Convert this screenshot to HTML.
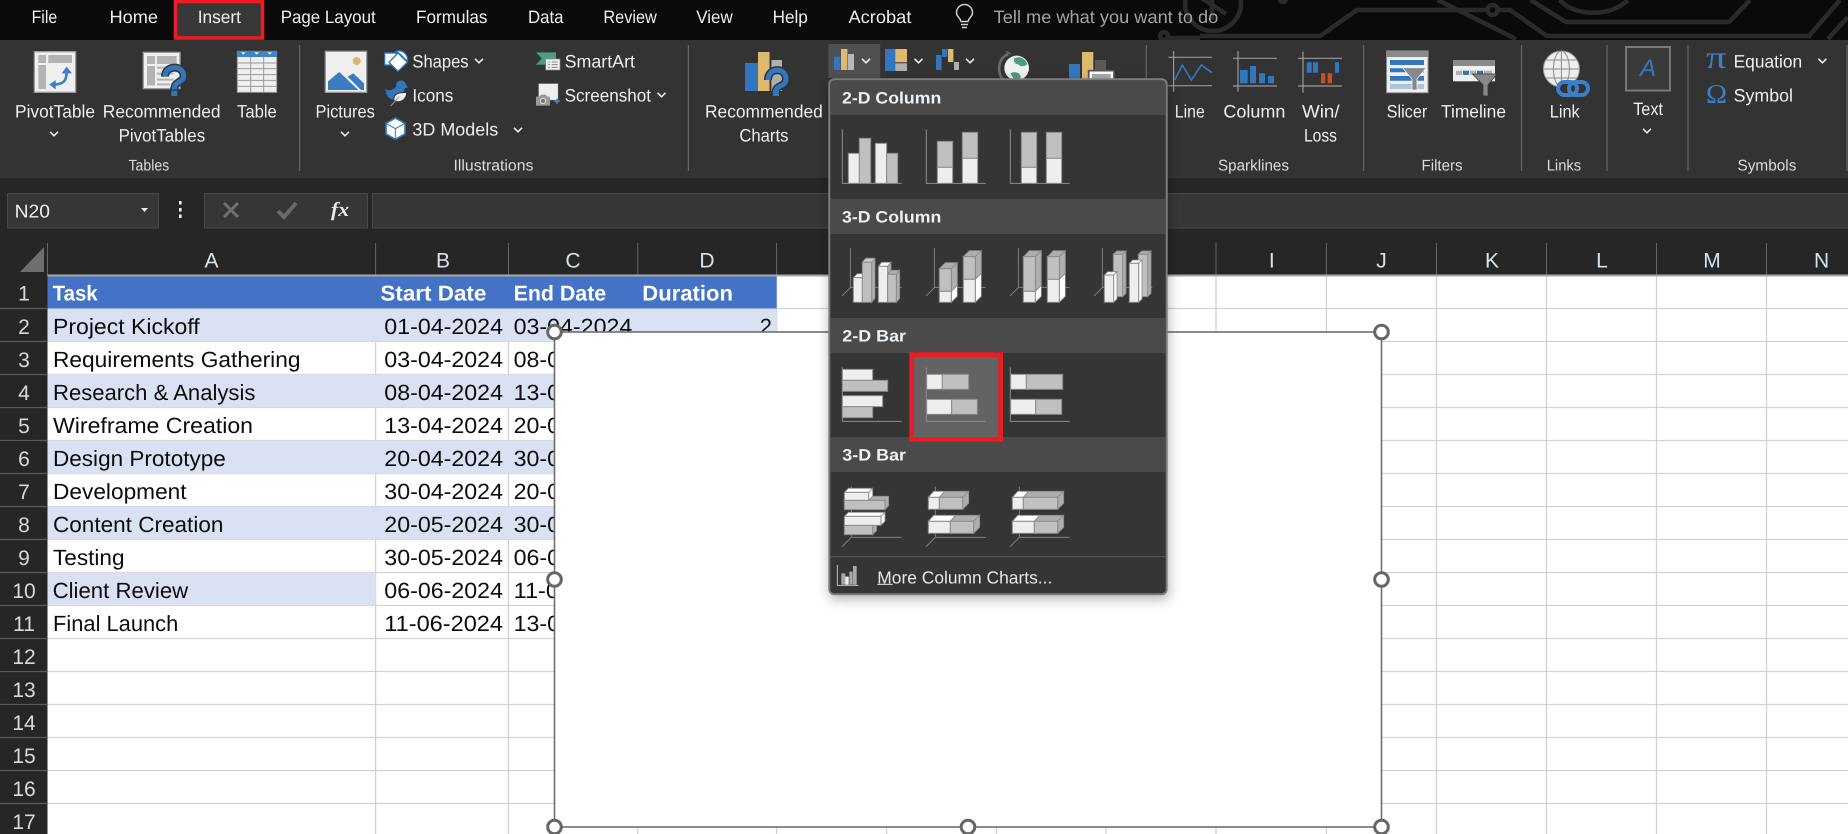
<!DOCTYPE html>
<html lang="en"><head><meta charset="utf-8"><title>Excel Insert Chart</title>
<style>
html,body{margin:0;padding:0;width:1848px;height:834px;overflow:hidden;background:#fff}
svg{display:block}
text{font-family:"Liberation Sans",sans-serif;text-rendering:geometricPrecision;white-space:pre}
.tab{font-size:18px;fill:#efefef}
.r{font-size:18px;fill:#efefef}
.g{font-size:15.5px;fill:#dcdcdc}
.t{font-size:22px;fill:#0c0c0c}
.h{font-size:21.5px;fill:#fff;font-weight:bold}
.hd{font-size:21px;fill:#d8e2ea;text-anchor:middle}
.rn{font-size:21px;fill:#d9d9d9;text-anchor:middle}
.m{font-size:16.5px;font-weight:bold;fill:#edf2f8}
.ax{fill:none;stroke:#8c8c8c;stroke-width:3}
.w{fill:#eeeeee;stroke:#8a8a8a;stroke-width:3}
.k{fill:#c0c0c0;stroke:#8a8a8a;stroke-width:3}
.w2{fill:#ffffff;stroke:#8a8a8a;stroke-width:2.5}
.k2{fill:#aeaeae;stroke:#8a8a8a;stroke-width:2.5}
.ch{fill:none;stroke:#efefef;stroke-width:1.6}
.c{fill:none;stroke:#2a2a2a;stroke-width:4.5}
.hn{fill:#fff;stroke:#666;stroke-width:3}
</style></head>
<body>
<svg xmlns="http://www.w3.org/2000/svg" width="1848" height="834" viewBox="0 0 1848 834">
<defs>
<path id="chev" d="M-4 -2.2L0 1.8L4 -2.2"/>
<filter id="sh" x="-10%" y="-10%" width="120%" height="120%"><feDropShadow dx="1" dy="4" stdDeviation="6" flood-color="#000" flood-opacity=".3"/></filter>
</defs>

<!-- base -->
<rect width="1848" height="834" fill="#fff"/>
<rect width="1848" height="40" fill="#0a0a0a"/>
<!-- circuit pattern -->
<path class="c" d="M1200 36H1320L1357 10H1487M1498 10H1510L1547 36H1809L1840 0"/>
<circle class="c" cx="1492.5" cy="10" r="5"/>
<path class="c" d="M1437.6 0L1516 39M1530.6 0L1566 22H1729L1750 0M1559.5 0C1575 17 1612 17 1627.7 0M1828 39L1848 17"/>
<circle class="c" cx="1213" cy="3" r="28"/>
<path class="c" d="M1200 -3L1226 14M1212 -5V20"/>
<circle class="c" cx="1164" cy="36" r="4"/>
<circle class="c" cx="1283" cy="-1" r="3"/>
<path class="c" d="M1168 38H1200"/>
<rect y="40" width="1848" height="138" fill="#333333"/>
<rect y="178" width="1848" height="98" fill="#262626"/>
<rect y="276" width="47.5" height="558" fill="#262626"/>

<!-- tabs -->
<rect x="177" y="2" width="85" height="37" fill="#383838"/>
<text class="tab" x="31.6" y="23" textLength="25.6" lengthAdjust="spacingAndGlyphs">File</text>
<text class="tab" x="109.5" y="23" textLength="48.5" lengthAdjust="spacingAndGlyphs">Home</text>
<text class="tab" x="197.7" y="23" textLength="43.3" lengthAdjust="spacingAndGlyphs">Insert</text>
<text class="tab" x="280.7" y="23" textLength="95" lengthAdjust="spacingAndGlyphs">Page Layout</text>
<text class="tab" x="416" y="23" textLength="71.5" lengthAdjust="spacingAndGlyphs">Formulas</text>
<text class="tab" x="528" y="23" textLength="35.5" lengthAdjust="spacingAndGlyphs">Data</text>
<text class="tab" x="603.4" y="23" textLength="53.4" lengthAdjust="spacingAndGlyphs">Review</text>
<text class="tab" x="696.3" y="23" textLength="36.4" lengthAdjust="spacingAndGlyphs">View</text>
<text class="tab" x="772.6" y="23" textLength="35.2" lengthAdjust="spacingAndGlyphs">Help</text>
<text class="tab" x="848.5" y="23" textLength="62.9" lengthAdjust="spacingAndGlyphs">Acrobat</text>
<text class="tab" x="993.7" y="23" textLength="224.6" lengthAdjust="spacingAndGlyphs" style="fill:#a3a3a3">Tell me what you want to do</text>
<rect x="175.5" y="1.5" width="87" height="36.5" fill="none" stroke="#ed1c24" stroke-width="3.6"/>
<g fill="none" stroke="#d0d0d0" stroke-width="1.5"><path d="M961 21.5C960 17 956.5 17 956.5 12.5A8 8 0 0 1 972.5 12.5C972.5 17 969 17 968 21.5ZM961 24.5H968M962 27.5H967"/></g>

<!-- separators -->
<g stroke="#666" stroke-width="1.2">
<path d="M299.7 45V171M688.4 45V171M1146.3 45V171M1363.7 45V171M1521.5 45V171M1607 45V171M1688 45V171M1847 45V171"/>
</g>

<!-- ribbon labels -->
<text class="r" x="15" y="117.3" textLength="80" lengthAdjust="spacingAndGlyphs">PivotTable</text>
<text class="r" x="102.8" y="117.3" textLength="117.8" lengthAdjust="spacingAndGlyphs">Recommended</text>
<text class="r" x="118.6" y="141.5" textLength="86.6" lengthAdjust="spacingAndGlyphs">PivotTables</text>
<text class="r" x="237" y="117.3" textLength="39.8" lengthAdjust="spacingAndGlyphs">Table</text>
<text class="r" x="315.5" y="117.3" textLength="59.3" lengthAdjust="spacingAndGlyphs">Pictures</text>
<text class="r" x="412.4" y="67.7" textLength="56.2" lengthAdjust="spacingAndGlyphs">Shapes</text>
<text class="r" x="412.4" y="101.7" textLength="41" lengthAdjust="spacingAndGlyphs">Icons</text>
<text class="r" x="412.4" y="135.7" textLength="85.8" lengthAdjust="spacingAndGlyphs">3D Models</text>
<text class="r" x="564.6" y="67.7" textLength="70.4" lengthAdjust="spacingAndGlyphs">SmartArt</text>
<text class="r" x="564.6" y="101.7" textLength="86.4" lengthAdjust="spacingAndGlyphs">Screenshot</text>
<text class="r" x="705" y="117.3" textLength="117.8" lengthAdjust="spacingAndGlyphs">Recommended</text>
<text class="r" x="739.4" y="141.5" textLength="49" lengthAdjust="spacingAndGlyphs">Charts</text>
<text class="r" x="1174.8" y="117.3" textLength="30" lengthAdjust="spacingAndGlyphs">Line</text>
<text class="r" x="1223.4" y="117.3" textLength="62" lengthAdjust="spacingAndGlyphs">Column</text>
<text class="r" x="1302" y="117.3" textLength="37.6" lengthAdjust="spacingAndGlyphs">Win/</text>
<text class="r" x="1304" y="141.5" textLength="33" lengthAdjust="spacingAndGlyphs">Loss</text>
<text class="r" x="1386.6" y="117.3" textLength="40.7" lengthAdjust="spacingAndGlyphs">Slicer</text>
<text class="r" x="1441" y="117.3" textLength="65" lengthAdjust="spacingAndGlyphs">Timeline</text>
<text class="r" x="1549.8" y="117.3" textLength="29.9" lengthAdjust="spacingAndGlyphs">Link</text>
<text class="r" x="1633.2" y="115" textLength="29.8" lengthAdjust="spacingAndGlyphs">Text</text>
<text class="r" x="1733.6" y="67.7" textLength="68.6" lengthAdjust="spacingAndGlyphs">Equation</text>
<text class="r" x="1733.6" y="101.7" textLength="59.4" lengthAdjust="spacingAndGlyphs">Symbol</text>
<text class="g" x="128.5" y="170.7" textLength="40.7" lengthAdjust="spacingAndGlyphs">Tables</text>
<text class="g" x="453.5" y="170.7" textLength="79.9" lengthAdjust="spacingAndGlyphs">Illustrations</text>
<text class="g" x="1218" y="170.7" textLength="71" lengthAdjust="spacingAndGlyphs">Sparklines</text>
<text class="g" x="1421.5" y="170.7" textLength="41.1" lengthAdjust="spacingAndGlyphs">Filters</text>
<text class="g" x="1546.7" y="170.7" textLength="34.5" lengthAdjust="spacingAndGlyphs">Links</text>
<text class="g" x="1737.5" y="170.7" textLength="58.9" lengthAdjust="spacingAndGlyphs">Symbols</text>

<!-- icons row 1: zoom coords -->
<g transform="translate(25,44) scale(.33333)">
 <rect x="28" y="23" width="124" height="122" fill="#efefef" stroke="#9a9a9a" stroke-width="4"/>
 <path d="M40 33h23v24h-23zM70 33h71v24h-71zM40 63h23v72h-23z" fill="#b3b3b3"/>
 <path d="M125 82C125 112 115 120 88 122" fill="none" stroke="#3a7fc7" stroke-width="8"/>
 <path d="M110 88L125 68L141 88ZM92 108L73 122L92 136Z" fill="#3a7fc7"/>
 <rect x="355" y="25" width="110" height="109" fill="#efefef" stroke="#9a9a9a" stroke-width="4"/>
 <path d="M366 36h24v24h-24zM396 36h59v24h-59zM366 66h24v58h-24zM396 68h30v6h-30zM396 86h50v6h-50zM396 104h50v6h-50zM396 118h40v6h-40z" fill="#b3b3b3"/>
 <path d="M420 98C420 62 476 62 476 96C476 116 448 110 448 136" fill="none" stroke="#333" stroke-width="24"/>
 <path d="M420 98C420 62 476 62 476 96C476 116 448 110 448 136" fill="none" stroke="#3277bd" stroke-width="15"/>
 <rect x="439" y="140" width="18" height="16" fill="#3277bd"/>
 <rect x="637" y="22" width="118" height="123" fill="#efefef" stroke="#9a9a9a" stroke-width="3"/>
 <rect x="636" y="21" width="120" height="18" fill="#3d85c6"/>
 <path d="M648 25h14l-7 7zM688 25h14l-7 7zM727 25h14l-7 7z" fill="#fff"/>
 <path d="M637 57H755M637 74H755M637 92H755M637 109H755M637 127H755M677 39V145M716 39V145" stroke="#9a9a9a" stroke-width="3" fill="none"/>
 <rect x="901" y="22" width="124" height="123" fill="#efefef" stroke="#9a9a9a" stroke-width="4"/>
 <circle cx="995" cy="51" r="12" fill="#e0b46c"/>
 <path d="M909 138V112L943 84L1000 138ZM968 98L985 88L1017 118V138H1008Z" fill="#3a7cc1"/>
</g>

<!-- shapes column -->
<g transform="translate(380,44) scale(.33333)">
 <rect x="14" y="27" width="35" height="36" fill="#fff" stroke="#2f75b5" stroke-width="4"/>
 <path d="M48 22A26 26 0 0 1 82 52L60 30Z" fill="#fff" stroke="#2f75b5" stroke-width="4"/>
 <path d="M54 27L82 55L54 82L27 55Z" fill="#fff" stroke="#2f75b5" stroke-width="4"/>
 <circle cx="63" cy="124" r="15" fill="#3277bd"/><path d="M74 118L84 130L70 133Z" fill="#3277bd"/>
 <path d="M15 135C20 165 40 172 50 165L74 138L50 125C40 140 28 142 15 135Z" fill="#3277bd"/>
 <path d="M42 170C38 150 55 145 80 145C80 165 62 180 42 170Z" fill="#eee" stroke="#333" stroke-width="3"/>
 <path d="M32 186L58 158" stroke="#999" stroke-width="3"/>
 <path d="M46 222L75 238V270L46 286L18 270V238Z" fill="#fff" stroke="#2f75b5" stroke-width="5"/>
 <path d="M18 238L46 254L75 238M46 254V286" fill="none" stroke="#2f75b5" stroke-width="3"/>
 <path d="M468 25H528V50H498V62H468L485 44Z" fill="#4e9a85"/>
 <rect x="497" y="45" width="43" height="33" fill="#efefef" stroke="#8a8a8a" stroke-width="2"/>
 <path d="M505 54h5M515 54h18M505 62h5M515 62h18M505 70h5M515 70h18" stroke="#888" stroke-width="3"/>
 <rect x="476" y="119" width="58" height="49" fill="#efefef" stroke="#999" stroke-width="2" stroke-dasharray="4 3"/>
 <path d="M468 185V158H478L483 152H497L502 158H510V185Z" fill="#9a9a9a"/>
 <circle cx="489" cy="171" r="8" fill="#777" stroke="#ddd" stroke-width="3"/>
 <path d="M531 164V180M523 172H540" stroke="#3a7fc7" stroke-width="5"/>
</g>

<!-- recommended charts -->
<rect x="745" y="63" width="13" height="28" fill="#3277bd"/>
<rect x="758" y="52" width="11.5" height="39" fill="#e0b970"/>
<rect x="771.4" y="60" width="10.6" height="31" fill="#b0b0b0"/>
<path d="M768 80C768 67 786 67 786 79C786 87 776 85 776 91" fill="none" stroke="#333" stroke-width="8"/>
<path d="M768 80C768 67 786 67 786 79C786 87 776 85 776 91" fill="none" stroke="#3277bd" stroke-width="5"/>
<rect x="773" y="90" width="6" height="6" fill="#3277bd"/>

<!-- chart group -->
<rect x="828.4" y="44" width="51.8" height="34" fill="#505050"/>
<rect x="834" y="56.7" width="6.3" height="13.3" fill="#3277bd"/><rect x="841" y="49" width="6.4" height="21" fill="#e0b970"/><rect x="848" y="54" width="6" height="16" fill="#b8b8b8"/>
<rect x="885" y="49" width="10" height="22" fill="#3277bd"/><rect x="895.2" y="49" width="11.8" height="13.3" fill="#e0b970"/><rect x="895.2" y="63.3" width="11.8" height="7.7" fill="#b0b0b0"/>
<rect x="936" y="55" width="5.5" height="15" fill="#3277bd"/><rect x="942" y="49" width="5.4" height="8" fill="#3277bd"/><rect x="948" y="49" width="5.4" height="13" fill="#e0b970"/><rect x="954" y="62" width="5" height="8" fill="#b0b0b0"/>
<g transform="translate(990,44) scale(.33333)">
 <path d="M55 30C20 45 22 90 40 108" fill="none" stroke="#6a6a6a" stroke-width="8"/>
 <path d="M48 22L62 30" stroke="#6a6a6a" stroke-width="4"/>
 <circle cx="80" cy="72" r="37" fill="#f0f0f0"/>
 <path d="M72 44C85 34 105 42 112 60C100 72 88 66 84 60C76 62 70 52 72 44ZM62 88C75 80 92 86 92 100C80 110 68 106 62 88Z" fill="#4f9c80"/>
 <rect x="237" y="60" width="33" height="60" fill="#3277bd"/><rect x="276" y="24" width="34" height="96" fill="#e0b970"/><rect x="315" y="48" width="33" height="40" fill="#5a5a5a"/>
 <rect x="296" y="80" width="76" height="40" fill="#fff" stroke="#555" stroke-width="5"/><rect x="306" y="90" width="56" height="30" fill="#aaa"/>
</g>

<!-- chevrons -->
<g class="ch">
<use href="#chev" x="54" y="134"/><use href="#chev" x="345" y="134"/><use href="#chev" x="479" y="61"/><use href="#chev" x="518" y="130"/><use href="#chev" x="661.5" y="95"/><use href="#chev" x="866" y="61"/><use href="#chev" x="918.5" y="61"/><use href="#chev" x="970" y="61"/><use href="#chev" x="1647" y="131"/><use href="#chev" x="1822.4" y="61"/>
</g>

<!-- sparklines -->
<path d="M1168.4 57.3H1212M1168.4 85.7H1212M1173.6 51V91.7M1233 58.3H1277M1233 86H1277M1238 51V91.7M1298 58.3H1342M1298 86H1342M1303 51.7V92.7" stroke="#9a9a9a" stroke-width="1.2" fill="none"/>
<path d="M1174.8 80L1182.3 65L1191.4 80L1201.3 65L1212 72.7" fill="none" stroke="#3277bd" stroke-width="1.6"/>
<path d="M1240 70h7.7v13.3h-7.7zM1250 66h6v17.3h-6zM1259 73.3h6v10h-6zM1268 76h6v7.3h-6zM1306.7 62.3h5v10.4h-5zM1313 62.3h5v10.4h-5zM1335 62.3h4v10.4h-4z" fill="#3277bd"/>
<path d="M1321 73.3h4.3v10h-4.3zM1327.6 73.3h4.4v10h-4.4z" fill="#c8502a"/>

<!-- slicer -->
<rect x="1386.6" y="51" width="41.4" height="41.7" fill="#efefef" stroke="#9a9a9a"/>
<rect x="1386.6" y="51" width="41.4" height="6" fill="#8a8a8a"/>
<path d="M1390 60h34v5h-34zM1390 68.3h34v4h-34zM1390 76h34v4.7h-34z" fill="#3277bd"/>
<rect x="1390" y="84" width="34" height="5" fill="#b0c4de"/>
<path d="M1402.5 67.7H1426L1417 79V90H1412V79Z" fill="#888" stroke="#efefef" stroke-width=".8"/>
<!-- timeline -->
<rect x="1453" y="60" width="42" height="21.3" fill="#efefef"/>
<rect x="1453" y="60" width="42" height="6" fill="#8a8a8a"/>
<path d="M1456 70.7h6v4.3h-6zM1470 70.7h6v4.3h-6zM1484 70.7h8v4.3h-8z" fill="#b0b0b0"/>
<path d="M1463 70.7h6v4.3h-6zM1477 70.7h6v4.3h-6z" fill="#3277bd"/>
<path d="M1472.6 74H1497L1488 85V96H1483V85Z" fill="#888" stroke="#333" stroke-width=".8"/>
<!-- link -->
<circle cx="1561.4" cy="69" r="18" fill="#eee" stroke="#9a9a9a"/>
<path d="M1543.4 69H1579.4M1546 60H1577M1546 78H1577M1561.4 51V87" stroke="#8a8a8a" fill="none"/>
<ellipse cx="1561.4" cy="69" rx="8" ry="18" fill="none" stroke="#8a8a8a"/>
<rect x="1558" y="82" width="19" height="13" rx="6.5" fill="#333" stroke="#3a7fc7" stroke-width="4"/>
<rect x="1569" y="82" width="19" height="13" rx="6.5" fill="none" stroke="#3a7fc7" stroke-width="4"/>
<!-- text box -->
<rect x="1626" y="47" width="44" height="43.5" fill="#3a3a3a" stroke="#7a7a7a" stroke-width="2"/>
<text x="1648" y="76" text-anchor="middle" style="font-size:24px;font-style:italic;fill:#3277bd">A</text>
<text x="1706" y="68" style="font-size:32px;font-family:'Liberation Serif',serif;fill:#3a7fc7" textLength="20.5" lengthAdjust="spacingAndGlyphs">π</text>
<text x="1706" y="103" style="font-size:27px;font-family:'Liberation Serif',serif;fill:#3a7fc7" textLength="21" lengthAdjust="spacingAndGlyphs">Ω</text>

<!-- formula bar -->
<rect x="7.5" y="193.5" width="151" height="34.5" fill="#363636" stroke="#484848"/>
<text x="14.6" y="217.7" textLength="35.4" lengthAdjust="spacingAndGlyphs" style="font-size:18.5px;fill:#efefef">N20</text>
<path d="M141 208h7l-3.500 4z" fill="#efefef"/>
<path d="M180.300 201v3.500M180.300 208v3.500M180.300 214.500v3.500" stroke="#efefef" stroke-width="2.600"/>
<rect x="204.500" y="193.500" width="163" height="34.500" fill="#363636" stroke="#484848"/>
<path d="M224 203L238 217M238 203L224 217" stroke="#707070" stroke-width="3"/>
<path d="M278 211L284 217L296 203" fill="none" stroke="#6a6a6a" stroke-width="4"/>
<text x="331" y="216" style="font-size:20px;font-family:'Liberation Serif',serif;font-style:italic;font-weight:bold;fill:#e8e8e8" textLength="18" lengthAdjust="spacingAndGlyphs">fx</text>
<rect x="372.500" y="193.500" width="1480" height="34.500" fill="#363636" stroke="#484848"/>

<!-- column headers -->
<path d="M44 247V272H20Z" fill="#6e6e6e"/>
<path d="M47.500 243V276M375.600 243V275M508.500 243V275M637.800 243V275M776.600 243V275M886.600 243V275M996.500 243V275M1106 243V275M1216 243V275M1326.400 243V275M1436.500 243V275M1546.500 243V275M1656.500 243V275M1766.500 243V275" stroke="#666" stroke-width="1"/>
<text class="hd" x="211.500" y="267.700">A</text><text class="hd" x="443" y="267.700">B</text><text class="hd" x="573" y="267.700">C</text><text class="hd" x="707" y="267.700">D</text>
<text class="hd" x="1271.800" y="267.700">I</text><text class="hd" x="1381.500" y="267.700">J</text><text class="hd" x="1492" y="267.700">K</text><text class="hd" x="1602" y="267.700">L</text><text class="hd" x="1712" y="267.700">M</text><text class="hd" x="1821.600" y="267.700">N</text>

<!-- row headers -->
<path d="M0 308.500H47M0 341.500H47M0 374.500H47M0 407.500H47M0 440.500H47M0 473.500H47M0 506.500H47M0 539.500H47M0 572.500H47M0 605.500H47M0 638.500H47M0 671.500H47M0 704.500H47M0 737.500H47M0 770.500H47M0 803.500H47" stroke="#5a5a5a" stroke-width="1.200"/>
<rect x="47.500" y="276" width="1800.500" height="558" fill="#fff"/>
<text class="rn" x="24" y="300.700">1</text><text class="rn" x="24" y="334">2</text><text class="rn" x="24" y="367">3</text><text class="rn" x="24" y="400">4</text><text class="rn" x="24" y="433">5</text><text class="rn" x="24" y="466">6</text><text class="rn" x="24" y="499">7</text><text class="rn" x="24" y="532">8</text><text class="rn" x="24" y="565">9</text><text class="rn" x="24" y="598">10</text><text class="rn" x="24" y="631">11</text><text class="rn" x="24" y="664">12</text><text class="rn" x="24" y="697">13</text><text class="rn" x="24" y="730">14</text><text class="rn" x="24" y="763">15</text><text class="rn" x="24" y="796">16</text><text class="rn" x="24" y="829">17</text>

<!-- gridlines -->
<path d="M47.500 308.500H1848M47.500 341.500H1848M47.500 374.500H1848M47.500 407.500H1848M47.500 440.500H1848M47.500 473.500H1848M47.500 506.500H1848M47.500 539.500H1848M47.500 572.500H1848M47.500 605.500H1848M47.500 638.500H1848M47.500 671.500H1848M47.500 704.500H1848M47.500 737.500H1848M47.500 770.500H1848M47.500 803.500H1848M375.600 276V834M508.500 276V834M637.800 276V834M776.600 276V834M886.600 276V834M996.500 276V834M1106 276V834M1216 276V834M1326.400 276V834M1436.500 276V834M1546.500 276V834M1656.500 276V834M1766.500 276V834" stroke="#d2d2d2" stroke-width="1.300" fill="none"/>

<!-- table fills -->
<rect x="47.500" y="276" width="729.100" height="32.500" fill="#4472c4"/>
<g fill="#d9e1f2">
<rect x="47.500" y="308.500" width="729.100" height="33"/><rect x="47.500" y="374.500" width="729.100" height="33"/><rect x="47.500" y="440.500" width="729.100" height="33"/><rect x="47.500" y="506.500" width="729.100" height="33"/><rect x="47.500" y="572.500" width="328.100" height="33"/>
</g>
<path d="M47.500 275.500H1848" stroke="#a8a8a8" stroke-width="2"/>

<!-- table text -->
<text class="h" x="52.600" y="300.700" textLength="45.100" lengthAdjust="spacingAndGlyphs">Task</text>
<text class="h" x="380.400" y="300.700" textLength="106" lengthAdjust="spacingAndGlyphs">Start Date</text>
<text class="h" x="513.600" y="300.700" textLength="92.600" lengthAdjust="spacingAndGlyphs">End Date</text>
<text class="h" x="642.300" y="300.700" textLength="90.700" lengthAdjust="spacingAndGlyphs">Duration</text>
<text class="t" x="53" y="334" textLength="146.700" lengthAdjust="spacingAndGlyphs">Project Kickoff</text>
<text class="t" x="53" y="367" textLength="247.500" lengthAdjust="spacingAndGlyphs">Requirements Gathering</text>
<text class="t" x="53" y="400" textLength="202.400" lengthAdjust="spacingAndGlyphs">Research &amp; Analysis</text>
<text class="t" x="53" y="433" textLength="200" lengthAdjust="spacingAndGlyphs">Wireframe Creation</text>
<text class="t" x="53" y="466" textLength="172.800" lengthAdjust="spacingAndGlyphs">Design Prototype</text>
<text class="t" x="53" y="499" textLength="133.600" lengthAdjust="spacingAndGlyphs">Development</text>
<text class="t" x="53" y="532" textLength="170.400" lengthAdjust="spacingAndGlyphs">Content Creation</text>
<text class="t" x="53" y="565" textLength="71.500" lengthAdjust="spacingAndGlyphs">Testing</text>
<text class="t" x="52.600" y="598" textLength="135.600" lengthAdjust="spacingAndGlyphs">Client Review</text>
<text class="t" x="53" y="631" textLength="125.300" lengthAdjust="spacingAndGlyphs">Final Launch</text>
<g>
<text class="t" x="384.300" y="334" textLength="118.700" lengthAdjust="spacingAndGlyphs">01-04-2024</text>
<text class="t" x="384.300" y="367" textLength="118.700" lengthAdjust="spacingAndGlyphs">03-04-2024</text>
<text class="t" x="384.300" y="400" textLength="118.700" lengthAdjust="spacingAndGlyphs">08-04-2024</text>
<text class="t" x="384.300" y="433" textLength="118.700" lengthAdjust="spacingAndGlyphs">13-04-2024</text>
<text class="t" x="384.300" y="466" textLength="118.700" lengthAdjust="spacingAndGlyphs">20-04-2024</text>
<text class="t" x="384.300" y="499" textLength="118.700" lengthAdjust="spacingAndGlyphs">30-04-2024</text>
<text class="t" x="384.300" y="532" textLength="118.700" lengthAdjust="spacingAndGlyphs">20-05-2024</text>
<text class="t" x="384.300" y="565" textLength="118.700" lengthAdjust="spacingAndGlyphs">30-05-2024</text>
<text class="t" x="384.300" y="598" textLength="118.700" lengthAdjust="spacingAndGlyphs">06-06-2024</text>
<text class="t" x="384.300" y="631" textLength="118.700" lengthAdjust="spacingAndGlyphs">11-06-2024</text>
<text class="t" x="513.600" y="334" textLength="118.700" lengthAdjust="spacingAndGlyphs">03-04-2024</text>
<text class="t" x="513.600" y="367" textLength="118.700" lengthAdjust="spacingAndGlyphs">08-04-2024</text>
<text class="t" x="513.600" y="400" textLength="118.700" lengthAdjust="spacingAndGlyphs">13-04-2024</text>
<text class="t" x="513.600" y="433" textLength="118.700" lengthAdjust="spacingAndGlyphs">20-04-2024</text>
<text class="t" x="513.600" y="466" textLength="118.700" lengthAdjust="spacingAndGlyphs">30-04-2024</text>
<text class="t" x="513.600" y="499" textLength="118.700" lengthAdjust="spacingAndGlyphs">20-05-2024</text>
<text class="t" x="513.600" y="532" textLength="118.700" lengthAdjust="spacingAndGlyphs">30-05-2024</text>
<text class="t" x="513.600" y="565" textLength="118.700" lengthAdjust="spacingAndGlyphs">06-06-2024</text>
<text class="t" x="513.600" y="598" textLength="118.700" lengthAdjust="spacingAndGlyphs">11-06-2024</text>
<text class="t" x="513.600" y="631" textLength="118.700" lengthAdjust="spacingAndGlyphs">13-06-2024</text>
<text class="t" x="772" y="334" text-anchor="end">2</text>
</g>

<!-- chart placeholder -->
<rect x="554.500" y="332" width="827" height="495" fill="#fff" stroke="#6e6e6e" stroke-width="1.600"/>
<circle class="hn" cx="554.500" cy="332" r="6.800"/><circle class="hn" cx="1381.500" cy="332" r="6.800"/>
<circle class="hn" cx="554.500" cy="579.500" r="6.800"/><circle class="hn" cx="1381.500" cy="579.500" r="6.800"/>
<circle class="hn" cx="554.500" cy="827" r="6.800"/><circle class="hn" cx="968" cy="827" r="6.800"/><circle class="hn" cx="1381.500" cy="827" r="6.800"/>

<!-- dropdown menu -->
<rect x="829.300" y="79.300" width="337.400" height="515" rx="5" fill="#363636" stroke="#7c7c7c" stroke-width="2" filter="url(#sh)"/>
<path d="M830.300 85Q830.300 80.300 835 80.300H1161Q1165.700 80.300 1165.700 85V115H830.300Z" fill="#4a4a4a"/>
<rect x="830.300" y="199" width="335.400" height="35" fill="#4a4a4a"/>
<rect x="830.300" y="318" width="335.400" height="35" fill="#4a4a4a"/>
<rect x="830.300" y="437" width="335.400" height="35" fill="#4a4a4a"/>
<path d="M830.300 556.700H1165.700" stroke="#555" stroke-width="1.200"/>
<text class="m" x="842" y="103.300" textLength="99.300" lengthAdjust="spacingAndGlyphs">2-D Column</text>
<text class="m" x="842" y="222.700" textLength="99.300" lengthAdjust="spacingAndGlyphs">3-D Column</text>
<text class="m" x="842.300" y="341.700" textLength="63.700" lengthAdjust="spacingAndGlyphs">2-D Bar</text>
<text class="m" x="842.300" y="460.300" textLength="63.700" lengthAdjust="spacingAndGlyphs">3-D Bar</text>

<!-- 2D + 3D column -->
<g transform="translate(820,70) scale(.33333)">
 <path class="ax" d="M67 178V340H245M319 178V340H497M571 178V340H749"/>
 <rect class="w" x="85" y="250" width="33" height="90"/><rect class="k" x="118" y="205" width="34" height="135"/><rect class="w" x="166" y="220" width="34" height="120"/><rect class="k" x="200" y="250" width="33" height="90"/>
 <rect class="k" x="352" y="214" width="46" height="78"/><rect class="w" x="352" y="292" width="46" height="48"/><rect class="k" x="427" y="187" width="46" height="78"/><rect class="w" x="427" y="265" width="46" height="75"/>
 <rect class="k" x="604" y="187" width="46" height="105"/><rect class="w" x="604" y="292" width="46" height="48"/><rect class="k" x="679" y="187" width="46" height="78"/><rect class="w" x="679" y="265" width="46" height="75"/>

 <path class="ax" d="M91 534V652M66 678L92 652H245M343 534V652M318 678L344 652H497M595 534V652M570 678L596 652H749M847 534V652M822 678L848 652H997" style="stroke-width:2.500"/>
 <!-- icon1 -->
 <path class="w2" d="M100 623L112 611H127V623Z"/><rect class="w" x="100" y="623" width="27" height="74"/>
 <path class="k2" d="M127 577L137 565H165V685L155 697V577Z"/><path class="k2" d="M127 577L137 565H165L155 577Z" style="fill:#c8c8c8"/><rect class="k" x="127" y="577" width="28" height="120"/>
 <path class="w2" d="M175 589L185 577H213L203 589Z"/><path class="k2" d="M203 589L213 577V610H203Z"/><rect class="w" x="175" y="589" width="28" height="108"/>
 <path class="k2" d="M203 613L213 601H239L229 613Z"/><path class="k2" d="M229 613L239 601V685L229 697Z"/><rect class="k" x="203" y="613" width="26" height="84"/>
 <!-- icon2 -->
 <path class="k2" d="M358 596L376 578H412L394 596Z"/><path class="k2" d="M394 596L412 578V646L394 664Z"/><path class="w2" d="M394 664L412 646V679L394 697Z"/><rect class="k" x="358" y="596" width="36" height="68"/><rect class="w" x="358" y="664" width="36" height="33"/>
 <path class="k2" d="M430 560L448 542H484L466 560Z"/><path class="k2" d="M466 560L484 542V610L466 628Z"/><path class="w2" d="M466 628L484 610V679L466 697Z"/><rect class="k" x="430" y="560" width="36" height="68"/><rect class="w" x="430" y="628" width="36" height="69"/>
 <!-- icon3 -->
 <path class="k2" d="M610 560L628 542H664L646 560Z"/><path class="k2" d="M646 560L664 542V646L646 664Z"/><path class="w2" d="M646 664L664 646V679L646 697Z"/><rect class="k" x="610" y="560" width="36" height="104"/><rect class="w" x="610" y="664" width="36" height="33"/>
 <path class="k2" d="M682 560L700 542H736L718 560Z"/><path class="k2" d="M718 560L736 542V610L718 628Z"/><path class="w2" d="M718 628L736 610V679L718 697Z"/><rect class="k" x="682" y="560" width="36" height="68"/><rect class="w" x="682" y="628" width="36" height="69"/>
 <!-- icon4 -->
 <path class="k2" d="M880 553L890 543H918L908 553Z"/><path class="k2" d="M908 553L918 543V670L908 680Z"/><rect class="k" x="880" y="553" width="28" height="127"/>
 <path class="k2" d="M955 553L965 543H993L983 553Z"/><path class="k2" d="M983 553L993 543V670L983 680Z"/><rect class="k" x="955" y="553" width="28" height="127"/>
 <path class="w2" d="M853 615L863 605H891L881 615Z"/><path class="w2" d="M881 615L891 605V687L881 697Z"/><rect class="w" x="853" y="615" width="28" height="82"/>
 <path class="w2" d="M928 580L938 570H966L956 580Z"/><path class="w2" d="M956 580L966 570V687L956 697Z"/><rect class="w" x="928" y="580" width="28" height="117"/>
</g>

<!-- 2D + 3D bar -->
<g transform="translate(820,310) scale(.33333)">
 <rect x="282" y="141" width="253" height="240" fill="#636363"/>
 <rect x="275" y="134" width="267" height="254" fill="none" stroke="#ed1c24" stroke-width="14"/>
 <path class="ax" d="M67 172V334H245M319 172V334H497M571 172V334H749"/>
 <rect class="w" x="67" y="178" width="91" height="33"/><rect class="k" x="67" y="211" width="136" height="33"/><rect class="w" x="67" y="257" width="121" height="33"/><rect class="k" x="67" y="290" width="91" height="33"/>
 <rect class="w" x="320" y="193" width="47" height="45"/><rect class="k" x="367" y="193" width="79" height="45"/><rect class="w" x="320" y="268" width="75" height="45"/><rect class="k" x="395" y="268" width="77" height="45"/>
 <rect class="w" x="572" y="193" width="47" height="45"/><rect class="k" x="619" y="193" width="109" height="45"/><rect class="w" x="572" y="268" width="75" height="45"/><rect class="k" x="647" y="268" width="78" height="45"/>

 <path class="ax" d="M94 530V682M66 710L94 682H245M346 530V682M318 710L346 682H497M598 530V682M570 710L598 682H749" style="stroke-width:2.500"/>
 <!-- 3d icon 1 -->
 <path class="k2" d="M73 571L85 559H206V587L195 599V571Z"/><rect class="k" x="73" y="571" width="122" height="28"/>
 <path class="w2" d="M73 547L85 535H158L146 547Z"/><path class="w2" d="M146 547L158 535V559L146 571Z"/><rect class="w" x="73" y="547" width="73" height="24"/>
 <path class="k2" d="M73 646L85 634H170V662L158 674V646Z"/><rect class="k" x="73" y="646" width="85" height="28"/>
 <path class="w2" d="M73 619L85 607H195L183 619Z"/><path class="w2" d="M183 619L195 607V634L183 646Z"/><rect class="w" x="73" y="619" width="110" height="27"/>
 <!-- 3d icon 2 -->
 <path class="w2" d="M325 562L341 544H374L358 562Z"/><path class="k2" d="M358 562L374 544H446L428 562Z"/><path class="k2" d="M428 562L446 544V580L428 598Z"/><rect class="w" x="325" y="562" width="33" height="36"/><rect class="k" x="358" y="562" width="70" height="36"/>
 <path class="w2" d="M325 634L341 616H407L391 634Z"/><path class="k2" d="M391 634L407 616H479L461 634Z"/><path class="k2" d="M461 634L479 616V652L461 670Z"/><rect class="w" x="325" y="634" width="66" height="36"/><rect class="k" x="391" y="634" width="70" height="36"/>
 <!-- 3d icon 3 -->
 <path class="w2" d="M577 562L593 544H626L610 562Z"/><path class="k2" d="M610 562L626 544H731L713 562Z"/><path class="k2" d="M713 562L731 544V580L713 598Z"/><rect class="w" x="577" y="562" width="33" height="36"/><rect class="k" x="610" y="562" width="103" height="36"/>
 <path class="w2" d="M577 634L593 616H659L643 634Z"/><path class="k2" d="M643 634L659 616H731L713 634Z"/><path class="k2" d="M713 634L731 616V652L713 670Z"/><rect class="w" x="577" y="634" width="66" height="36"/><rect class="k" x="643" y="634" width="70" height="36"/>
 <!-- more icon -->
 <path d="M52 765V826H116" fill="none" stroke="#bdbdbd" stroke-width="3"/>
 <path d="M64 790h12v34h-12zM76 800h10v24h-10zM88 785h10v39h-10zM99 768h11v56h-11z" fill="#a8a8a8"/>
 <path d="M76 800h10v24h-10z" fill="#eee"/>
 <path d="M172 823H218" stroke="#e8e8e8" stroke-width="3"/>
</g>
<text x="877.300" y="583.300" textLength="175" lengthAdjust="spacingAndGlyphs" style="font-size:17.500px;fill:#e8e8e8">More Column Charts...</text>
</svg>
</body></html>
